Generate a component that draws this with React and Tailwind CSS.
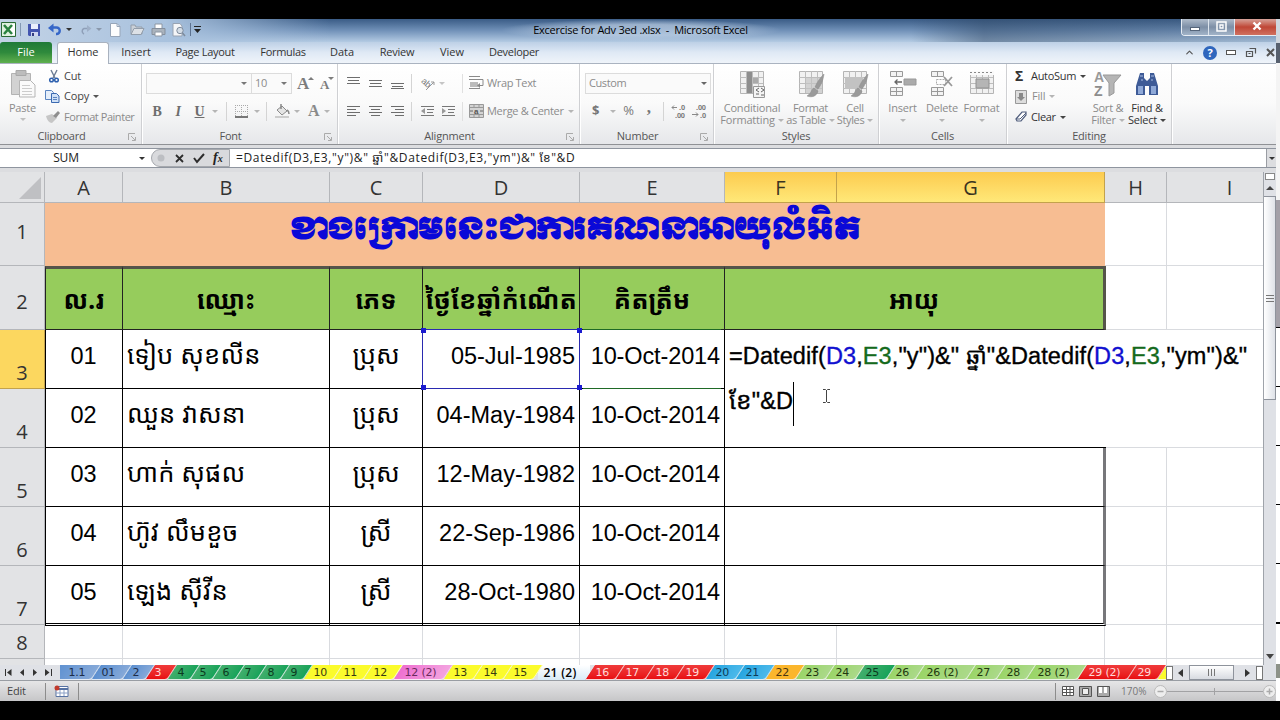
import { ChevronUp } from 'lucide-react'

const RIBBON_TABS = [
  { label: 'Insert', cls: 'w-[54px]' },
  { label: 'Page Layout', cls: 'w-[84px] tracking-[-0.3px]' },
  { label: 'Formulas', cls: 'w-[72px] tracking-[-0.3px]' },
  { label: 'Data', cls: 'w-[46px]' },
  { label: 'Review', cls: 'w-[64px] tracking-[-0.2px]' },
  { label: 'View', cls: 'w-[46px]' },
  { label: 'Developer', cls: 'w-[78px] tracking-[-0.3px]' },
]

const ROWS = [
  { id: '01', name: 'ទៀប សុខលីន', sex: 'ប្រុស', dob: '05-Jul-1985' },
  { id: '02', name: 'ឈួន វាសនា', sex: 'ប្រុស', dob: '04-May-1984' },
  { id: '03', name: 'ហាក់ សុផល', sex: 'ប្រុស', dob: '12-May-1982' },
  { id: '04', name: 'ហ៊ូវ លឹមខួច', sex: 'ស្រី', dob: '22-Sep-1986' },
  { id: '05', name: 'ឡេង ស៊ីវីន', sex: 'ស្រី', dob: '28-Oct-1980' },
]

const BLUE = 'bg-linear-to-r from-[#5b8fd0] to-[#86a9d8] text-[#1c2c48]'
const RED = 'bg-linear-to-b from-[#f03a3a] to-[#e80c10] text-[#ffd9d9]'
const GREEN = 'bg-linear-to-r from-[#3fae6c] to-[#16a35a] text-[#0c3a20]'
const YELLOW = 'bg-[#fbfb2c] text-[#3a3a10]'
const PINK = 'bg-linear-to-r from-[#ee6fd0] to-[#f3a3e0] text-[#6a2a5c]'
const SKY = 'bg-linear-to-r from-[#25a5e0] to-[#4bb9ea] text-[#0d3b58]'
const ORANGE = 'bg-[#fbb62c] text-[#4a3510]'
const LIME = 'bg-linear-to-r from-[#9ad566] to-[#abd98a] text-[#22380f]'

const SHEETS = [
  { label: '1.1', color: BLUE, cls: 'w-[46px] -ml-[10px] pl-[14px]' },
  { label: '01', color: BLUE, cls: 'w-[31px]' },
  { label: '2', color: BLUE, cls: 'w-[23px]' },
  { label: '3', color: RED, cls: 'w-[22px]' },
  { label: '4', color: GREEN, cls: 'w-[23px]' },
  { label: '5', color: GREEN, cls: 'w-[22px]' },
  { label: '6', color: GREEN, cls: 'w-[23px]' },
  { label: '7', color: GREEN, cls: 'w-[22px]' },
  { label: '8', color: GREEN, cls: 'w-[23px]' },
  { label: '9', color: GREEN, cls: 'w-[23px]' },
  { label: '10', color: YELLOW, cls: 'w-[30px]' },
  { label: '11', color: YELLOW, cls: 'w-[30px]' },
  { label: '12', color: YELLOW, cls: 'w-[30px]' },
  { label: '12 (2)', color: PINK, cls: 'w-[50px]' },
  { label: '13', color: YELLOW, cls: 'w-[30px]' },
  { label: '14', color: YELLOW, cls: 'w-[30px]' },
  { label: '15', color: YELLOW, cls: 'w-[30px]' },
  { label: '21 (2)', active: true, cls: 'w-[52px]' },
  { label: '16', color: RED, cls: 'w-[30px]' },
  { label: '17', color: RED, cls: 'w-[30px]' },
  { label: '18', color: RED, cls: 'w-[30px]' },
  { label: '19', color: RED, cls: 'w-[30px]' },
  { label: '20', color: SKY, cls: 'w-[30px]' },
  { label: '21', color: SKY, cls: 'w-[30px]' },
  { label: '22', color: ORANGE, cls: 'w-[30px]' },
  { label: '23', color: LIME, cls: 'w-[30px]' },
  { label: '24', color: LIME, cls: 'w-[30px]' },
  { label: '25', color: GREEN, cls: 'w-[31px]' },
  { label: '26', color: LIME, cls: 'w-[29px]' },
  { label: '26 (2)', color: LIME, cls: 'w-[51px]' },
  { label: '27', color: LIME, cls: 'w-[30px]' },
  { label: '28', color: LIME, cls: 'w-[30px]' },
  { label: '28 (2)', color: LIME, cls: 'w-[51px]' },
  { label: '29 (2)', color: RED, cls: 'w-[50px]' },
  { label: '29', color: RED, cls: 'w-[30px]' },
  { label: '', color: YELLOW, cls: 'w-[20px]' },
]

function Caret({ cls = 'border-t-[#777]' }) {
  return <span className={`inline-block h-0 w-0 shrink-0 border-x-[3px] border-t-[3px] border-x-transparent ${cls}`} />
}

function Icon({ w, h, children, cls = '' }) {
  return (
    <svg width={w} height={h} viewBox={`0 0 ${w} ${h}`} className={`shrink-0 overflow-visible ${cls}`} fill="none">
      {children}
    </svg>
  )
}

function Lines({ rows, cls = '' }) {
  return (
    <Icon w={14} h={13} cls={cls}>
      {rows.map(([x, y, w]) => (
        <path key={y} d={`M${x} ${y}.5h${w}`} stroke="#6d6d6d" />
      ))}
    </Icon>
  )
}

function Group({ label, launcher, cls, children }) {
  return (
    <section className={`flex h-full shrink-0 flex-col border-r border-[#cfd0d3] shadow-[1px_0_0_#fff] ${cls}`}>
      <div className="h-[64px] shrink-0">{children}</div>
      <div className={`relative flex h-[16px] items-center justify-center text-[#555] ${launcher ? 'pr-[18px]' : ''}`}>
        <span>{label}</span>
        {launcher && (
          <Icon w={8} h={8} cls="absolute right-[5px] bottom-[3px]">
            <path d="M.5 7V.5H7M3 3l4 4M7.500 4v3.500H4" stroke="#aaa" />
          </Icon>
        )}
      </div>
    </section>
  )
}

function BigButton({ icon, lines, caret, dark, cls }) {
  return (
    <div className={`flex shrink-0 flex-col items-center pt-[6px] ${dark ? 'text-[#333]' : 'text-[#8b8b8b]'} ${cls}`}>
      <div className="flex h-[28px] items-center">{icon}</div>
      <span className="mt-[3px] h-[13px] leading-[13px] whitespace-nowrap">{lines[0]}</span>
      <span className="flex h-[12px] items-center gap-[3px] leading-[12px] whitespace-nowrap">
        {lines[1]}
        {caret && <Caret cls={dark ? 'border-t-[#444]' : 'border-t-[#b5b5b5]'} />}
      </span>
    </div>
  )
}

function TableIcon({ children }) {
  return (
    <Icon w={28} h={28}>
      <path d="M2.500 1.500h23v22h-23z" fill="#f1f1f1" stroke="#b5b5b5" />
      <path d="M2 7.500h23M2 13.500h23M2 18.500h23M8.500 1v22M14.500 1v22M20.500 1v22" stroke="#bdbdbd" />
      {children}
    </Icon>
  )
}

const BRUSH = <path d="M27 4c-4 4-7 8-9 13l3 2c3-4 5-8 6-15zM17 18c-3 1-2 5-7 8 5 2 10 0 11-5z" fill="#9a9a9a" stroke="#8a8a8a" strokeWidth=".5" />

function TitleBar() {
  return (
    <div className="flex h-[23px] bg-linear-to-b from-[#3a5c86] via-[#7191b8] to-[#b4cbe3]">
      <div className="flex w-[330px] shrink-0 items-center bg-linear-to-r from-[#c3d3e6] via-[#a9c2de] to-transparent pb-[2px]">
        <Icon w={15} h={15} cls="ml-[1px]">
          <path d="M.5.5h14v14H.5z" fill="#dff0df" stroke="#2b6a37" />
          <path d="M9 2h5v11H9z" fill="#fff" />
          <path d="M3 3l8 9M11 3l-8 9" stroke="#2a8240" strokeWidth="2.600" />
        </Icon>
        <span className="ml-[4px] h-[13px] w-px bg-[#8398b3]" />
        <Icon w={14} h={14} cls="ml-[6px]">
          <path d="M1 1h12v12H2L1 12z" fill="#4355b0" />
          <path d="M4 1h7v5H4z" fill="#e9eefc" />
          <path d="M4 9h7v4H4z" fill="#cfd6f0" />
          <path d="M5 10h2v3H5z" fill="#333d80" />
        </Icon>
        <Icon w={14} h={13} cls="ml-[7px]">
          <path d="M3 4.500h5.500a3 3 0 010 6.500H8" stroke="#3566c8" strokeWidth="2.400" />
          <path d="M0 5L5.500 .5v9z" fill="#3566c8" />
        </Icon>
        <Caret cls="ml-[4px] border-t-[#333]" />
        <Icon w={13} h={12} cls="ml-[7px]">
          <path d="M9 4.500H5a3 3 0 000 5.500" stroke="#8e9fb8" strokeWidth="1.500" />
          <path d="M12.500 4.500L8 1v7z" fill="#9fb0c8" />
        </Icon>
        <Caret cls="ml-[4px] border-t-[#8a98ac]" />
        <Icon w={11} h={14} cls="ml-[8px]">
          <path d="M.5.5h6.500l3 3v10H.5z" fill="#fdfdfd" stroke="#97a5b8" />
          <path d="M7 .5v3h3" stroke="#97a5b8" />
        </Icon>
        <Icon w={14} h={13} cls="ml-[9px]">
          <path d="M1 11V2h4l1 2h6v7z" fill="#cbd1d8" stroke="#939eab" />
          <path d="M1 11.500l3-6h10l-3 6z" fill="#dde1e6" stroke="#939eab" />
        </Icon>
        <Icon w={15} h={14} cls="ml-[7px]">
          <path d="M4 1h7v5H4z" fill="#fff" stroke="#8c96a3" />
          <path d="M1 5.500h13v6H1z" fill="#aab3bd" stroke="#858f9c" />
          <path d="M4 9h7v4H4z" fill="#fff" stroke="#8c96a3" />
        </Icon>
        <Icon w={14} h={14} cls="ml-[6px]">
          <path d="M1 .5h7l2 2.500v10H1z" fill="#f5f6f8" stroke="#98a3b2" />
          <circle cx="8" cy="7.500" r="3.200" fill="#d4dde6" stroke="#7e8b9c" />
          <path d="M10.500 10l2.500 3" stroke="#7e8b9c" strokeWidth="1.500" />
        </Icon>
        <span className="ml-[4px] h-[13px] w-px bg-[#5d7290]" />
        <Icon w={7} h={8} cls="ml-[3px]">
          <path d="M0 .5h7" stroke="#222" />
          <path d="M0 3h7L3.500 7z" fill="#222" />
        </Icon>
      </div>
      <div className="flex flex-1 justify-center">
        <span className="ml-[40px] h-[22px] w-[280px] bg-[radial-gradient(closest-side,rgba(200,216,234,0.6)_50%,rgba(200,216,234,0)_100%)] text-center text-[11px] leading-[22px] tracking-[-0.26px] whitespace-pre text-black">
          Excercise for Adv 3ed .xlsx  -  Microsoft Excel
        </span>
      </div>
      <div className="flex w-[365px] shrink-0 justify-end bg-linear-to-r from-transparent from-0% via-[#2f4866]/50 via-20% to-[#3e5a7c]/15">
        <div className="flex h-[17px] overflow-hidden rounded-bl-[4px] border-b border-l border-[#e7edf4]">
          <div className="flex w-[27px] justify-center border-r border-[#dde5ee] bg-linear-to-b from-[#b0bccb] via-[#7d8fa6] to-[#a2b4c9]">
            <span className="mt-[8px] h-[4px] w-[10px] border border-[#55657a] bg-white" />
          </div>
          <div className="flex w-[26px] justify-center border-r border-[#dde5ee] bg-linear-to-b from-[#b0bccb] via-[#7d8fa6] to-[#a2b4c9]">
            <Icon w={11} h={11} cls="mt-[2px]">
              <path d="M1 1h9v9H1z" stroke="#fff" strokeWidth="1.500" />
              <path d="M4 4h3v3H4z" stroke="#fff" strokeWidth="1.300" />
            </Icon>
          </div>
          <div className="flex w-[41px] justify-center bg-linear-to-b from-[#d5a29a] via-[#bf4636] to-[#d0705f]">
            <Icon w={11} h={11} cls="mt-[2px] ml-[3px]">
              <path d="M1.500 1.500l7 7M8.500 1.500l-7 7" stroke="#fff" strokeWidth="2.400" />
            </Icon>
          </div>
        </div>
      </div>
    </div>
  )
}

function TabStrip() {
  return (
    <div className="flex h-[22px] items-end border-b border-[#aab3c0] bg-linear-to-b from-[#bdd0e6] via-[#dfe9f5] to-[#eff4fa]">
      <div className="flex h-[21px] w-[52px] items-center justify-center rounded-t-[3px] bg-linear-to-b from-[#1f7a38] via-[#2f8a3c] to-[#5fb04e] text-white">File</div>
      <div className="-mb-px ml-[5px] flex h-[22px] w-[52px] items-center justify-center rounded-t-[3px] border border-b-0 border-[#a9b2bf] bg-white pb-[2px] text-[#333]">Home</div>
      {RIBBON_TABS.map((t) => (
        <div key={t.label} className={`flex h-[21px] shrink-0 items-center justify-center whitespace-nowrap text-[#333] ${t.cls}`}>
          {t.label}
        </div>
      ))}
      <div className="ml-auto flex h-[21px] items-center">
        <ChevronUp size={11} strokeWidth={2.500} className="mr-[8px] text-[#555]" />
        <div className="mr-[9px] flex h-[14px] w-[14px] items-center justify-center rounded-full bg-[#2f66bd] text-[11px] leading-none font-bold text-white">?</div>
        <span className="mr-[9px] h-[5px] w-[10px] border border-[#555] bg-white" />
        <Icon w={12} h={11} cls="mr-[9px]">
          <path d="M4.500 1.500h6v5M1.500 4.500h6v5h-6zM3.500 6.500h2" stroke="#555" strokeWidth="1.200" />
        </Icon>
        <Icon w={9} h={9} cls="mr-px">
          <path d="M1 1l7 7M8 1L1 8" stroke="#555" strokeWidth="2" />
        </Icon>
      </div>
    </div>
  )
}

function Ribbon() {
  return (
    <div className="flex h-[80px] bg-linear-to-b from-white via-[#fafafa] to-[#e6e7ea] tracking-[-0.2px]">
      <Group label="Clipboard" launcher cls="w-[142px]">
        <div className="flex">
          <div className="flex w-[45px] flex-col items-center pt-[5px] text-[#8b8b8b]">
            <Icon w={26} h={29}>
              <path d="M1.500 4.500h19v21h-19z" fill="#d2d2d2" stroke="#b3b3b3" />
              <path d="M6 1.500h10v5H6z" fill="#bcbcbc" stroke="#a8a8a8" />
              <path d="M9.500 11.500h11l4.500 4.500v12H9.500z" fill="#fafafa" stroke="#b5b5b5" />
              <path d="M12 16.500h8M12 19.500h10M12 22.500h10M12 25.500h10" stroke="#ccc" />
            </Icon>
            <span className="mt-[3px] h-[14px] leading-[14px]">Paste</span>
            <Caret cls="mt-[3px] border-t-[#c0c0c0]" />
          </div>
          <div className="flex flex-col pt-[2px] text-[#444]">
            <div className="flex h-[20px] items-center gap-[5px] pl-[4px]">
              <Icon w={10} h={13}>
                <path d="M2 0l4 8M8 0L4 8" stroke="#6c7c94" strokeWidth="1.400" />
                <circle cx="2.500" cy="10" r="1.800" stroke="#2c5fae" strokeWidth="1.500" />
                <circle cx="7.500" cy="10" r="1.800" stroke="#2c5fae" strokeWidth="1.500" />
              </Icon>
              Cut
            </div>
            <div className="flex h-[21px] items-center gap-[4px]">
              <Icon w={15} h={13}>
                <path d="M.5.5h6l2 2v7h-8z" fill="#e5eefa" stroke="#5a84c0" />
                <path d="M6.500 3.500h5l2.500 2.500v6.500H6.500z" fill="#cfe0f6" stroke="#3a69b0" />
                <path d="M8 7.500h4M8 9.500h4" stroke="#5a84c0" />
              </Icon>
              Copy <Caret cls="border-t-[#555]" />
            </div>
            <div className="flex h-[20px] items-center gap-[4px] whitespace-nowrap text-[#8b8b8b]">
              <Icon w={15} h={13}>
                <path d="M1 5l6-2 5 4-5 5c-3 0-5-3-6-7z" fill="#c6c6c6" />
                <path d="M8 5l5-5 2 2-4 5z" fill="#8e8e8e" />
              </Icon>
              <span className="tracking-[-0.45px]">Format Painter</span>
            </div>
          </div>
        </div>
      </Group>

      <Group label="Font" launcher cls="w-[196px]">
        <div className="mt-[9px] flex h-[21px] items-center pl-[4px] text-[#8b8b8b]">
          <div className="flex h-[21px] w-[106px] items-center justify-end border border-[#dcdcdc] bg-[#fafafa] pr-[4px]"><Caret /></div>
          <div className="flex h-[21px] w-[40px] items-center justify-between border border-l-0 border-[#dcdcdc] bg-[#fafafa] pr-[4px] pl-[3px]">10 <Caret /></div>
          <div className="ml-[5px] flex h-[21px] font-['Liberation_Serif',serif] font-bold text-[#7d7d7d]">
            <span className="text-[17px] leading-[22px]">A</span><Caret cls="mt-[4px] -ml-px rotate-180 border-t-[#7d7d7d]" />
            <span className="ml-[6px] text-[13px] leading-[24px]">A</span><Caret cls="mt-[4px] -ml-px border-t-[#7d7d7d]" />
          </div>
        </div>
        <div className="mt-[6px] flex h-[22px] items-center font-['Liberation_Serif',serif] text-[14px] text-[#6d6d6d]">
          <b className="ml-[9px] w-[12px] text-center">B</b>
          <i className="ml-[10px] w-[10px] text-center font-bold">I</i>
          <span className="ml-[11px] w-[11px] text-center font-bold underline">U</span>
          <Caret cls="ml-[7px] border-t-[#b5b5b5]" />
          <span className="ml-[8px] h-[19px] w-px bg-[#d4d4d4]" />
          <Icon w={13} h={13} cls="ml-[8px]">
            <path d="M.5 0v12M6.500 0v12M12.500 0v12M0 .5h13M0 6.500h13" stroke="#aaa" strokeDasharray="1 1" />
            <path d="M0 12h13" stroke="#777" strokeWidth="2" />
          </Icon>
          <Caret cls="ml-[6px] border-t-[#b5b5b5]" />
          <span className="ml-[6px] h-[19px] w-px bg-[#d4d4d4]" />
          <Icon w={16} h={14} cls="ml-[8px]">
            <path d="M2 6l5-4 5 5-5 4z" fill="#e4e4e4" stroke="#8a8a8a" />
            <path d="M6 0v5M12 6c2 1 2 2 2 4" stroke="#888" strokeWidth="1.500" />
            <path d="M0 13h14" stroke="#ccc" strokeWidth="2" />
          </Icon>
          <Caret cls="ml-[3px] border-t-[#b5b5b5]" />
          <b className="ml-[8px] text-[16px] text-[#8a8a8a]">A</b>
          <Caret cls="ml-[5px] border-t-[#b5b5b5]" />
        </div>
      </Group>

      <Group label="Alignment" launcher cls="w-[242px]">
        <div className="mt-[9px] flex h-[21px] items-center text-[#8b8b8b]">
          <Lines cls="ml-[9px] mt-[-4px]" rows={[[0, 2, 13], [1, 5, 11], [0, 8, 13]]} />
          <Lines cls="ml-[8px]" rows={[[0, 3, 13], [1, 6, 11], [0, 9, 13]]} />
          <Lines cls="ml-[8px] mt-[4px]" rows={[[0, 4, 13], [1, 7, 11], [0, 9, 13]]} />
          <span className="ml-[6px] h-[19px] w-px bg-[#d4d4d4]" />
          <Icon w={15} h={15} cls="ml-[9px]">
            <text x="0" y="9" fontSize="9" fill="#777" fontFamily="Liberation Sans" transform="rotate(42 4 7)">ab</text>
            <path d="M5 14l8-8m-3 0h3v3" stroke="#999" />
          </Icon>
          <Caret cls="ml-[3px] border-t-[#c5c5c5]" />
          <span className="ml-[17px] h-[19px] w-px bg-[#e0e0e0]" />
          <Icon w={16} h={15} cls="ml-[6px]">
            <path d="M0 .5h11M0 3.500h14v6h-3M0 12.500h11" stroke="#8a8a8a" />
            <path d="M1 6h8v5H1z" fill="#bbb" />
            <path d="M11 7v5l-3-2.500z" fill="#888" />
          </Icon>
          <span className="ml-[2px] tracking-[-0.35px] whitespace-nowrap">Wrap Text</span>
        </div>
        <div className="mt-[6px] flex h-[22px] items-center text-[#8b8b8b]">
          <Lines cls="ml-[9px]" rows={[[0, 1, 13], [0, 4, 9], [0, 7, 13], [0, 10, 9]]} />
          <Lines cls="ml-[8px]" rows={[[0, 1, 13], [2, 4, 9], [0, 7, 13], [2, 10, 9]]} />
          <Lines cls="ml-[8px]" rows={[[0, 1, 13], [4, 4, 9], [0, 7, 13], [4, 10, 9]]} />
          <span className="ml-[6px] h-[19px] w-px bg-[#d4d4d4]" />
          <Icon w={15} h={13} cls="ml-[8px]">
            <path d="M1 1.500h13M7 4.500h7M7 7.500h6M1 10.500h13" stroke="#777" />
            <path d="M5 3v6L1 6z" fill="#999" />
          </Icon>
          <Icon w={15} h={13} cls="ml-[6px]">
            <path d="M1 1.500h13M7 4.500h7M7 7.500h6M1 10.500h13" stroke="#777" />
            <path d="M1 3v6l4-3z" fill="#999" />
          </Icon>
          <span className="ml-[6px] h-[19px] w-px bg-[#e0e0e0]" />
          <Icon w={15} h={14} cls="ml-[6px]">
            <path d="M.5.5h14v13H.5z" fill="#d3d3d3" stroke="#999" />
            <path d="M0 3.500h15M0 10.500h15M5 0v3M10 0v3M5 11v3M10 11v3" stroke="#999" />
            <text x="5" y="9.500" fontSize="8" fontWeight="bold" fill="#555" fontFamily="Liberation Sans">a</text>
            <path d="M1 7h3M11 7h3" stroke="#666" />
          </Icon>
          <span className="ml-[3px] tracking-[-0.3px] whitespace-nowrap">Merge &amp; Center</span>
          <Caret cls="ml-[4px] border-t-[#b5b5b5]" />
        </div>
      </Group>

      <Group label="Number" launcher cls="w-[134px]">
        <div className="mt-[9px] ml-[5px] flex h-[21px] w-[126px] items-center justify-between border border-[#dcdcdc] bg-[#fafafa] px-[3px] text-[#8b8b8b]">
          <span className="tracking-[-0.4px]">Custom</span> <Caret cls="border-t-[#666]" />
        </div>
        <div className="mt-[6px] flex h-[22px] items-center text-[#777]">
          <b className="ml-[12px] text-[13px]">$</b>
          <Caret cls="ml-[11px] border-t-[#b5b5b5]" />
          <span className="ml-[7px] text-[13px]">%</span>
          <b className="ml-[13px] -mt-[6px] font-['Liberation_Serif',serif] text-[17px]">,</b>
          <span className="ml-[12px] h-[19px] w-px bg-[#d4d4d4]" />
          <Icon w={16} h={14} cls="ml-[7px]">
            <text x="8" y="6" fontSize="7.500" fontWeight="bold" fill="#777" fontFamily="Liberation Sans">.0</text>
            <text x="4" y="14" fontSize="7.500" fontWeight="bold" fill="#777" fontFamily="Liberation Sans">.00</text>
            <path d="M1 3.500h5M3 1.500l-2 2 2 2" stroke="#888" />
          </Icon>
          <Icon w={16} h={14} cls="ml-[5px]">
            <text x="4" y="6" fontSize="7.500" fontWeight="bold" fill="#777" fontFamily="Liberation Sans">.00</text>
            <text x="8" y="14" fontSize="7.500" fontWeight="bold" fill="#777" fontFamily="Liberation Sans">.0</text>
            <path d="M0 10.500h6M4 8.500l2 2-2 2" stroke="#888" />
          </Icon>
        </div>
      </Group>

      <Group label="Styles" cls="w-[165px]">
        <div className="flex pl-px">
          <BigButton
            cls="w-[74px]"
            lines={['Conditional', 'Formatting']}
            caret
            icon={
              <TableIcon>
                <path d="M9 2h5v21H9z" fill="#8e8e8e" />
                <path d="M15 8h5v5h-5z" fill="#aaa" />
                <path d="M15.500 16.500h11v11h-11z" fill="#f4f4f4" stroke="#999" />
                <path d="M21 18l-3 2 3 2M18 24h3M23 18l3 2-3 2M23 25h3" stroke="#666" />
              </TableIcon>
            }
          />
          <BigButton cls="w-[43px] tracking-[-0.35px]" lines={['Format', 'as Table']} caret icon={<TableIcon><path d="M9 8h16v15H9z" fill="#c4c4c4" opacity=".7" />{BRUSH}</TableIcon>} />
          <BigButton cls="ml-[2px] w-[42px] tracking-[-0.35px]" lines={['Cell', 'Styles']} caret icon={<TableIcon><path d="M4 7h18v12H4z" fill="#c2c2c2" />{BRUSH}</TableIcon>} />
        </div>
      </Group>

      <Group label="Cells" cls="w-[128px]">
        <div className="flex pl-[3px]">
          <BigButton
            cls="w-[41px]"
            lines={['Insert', '']}
            caret
            icon={
              <Icon w={28} h={28}>
                <path d="M1.500 1.500h12v5h-12zM1.500 17.500h12v8h-12zM7.500 2v5M7.500 17v8M1 21.500h12" stroke="#999" fill="#f3f3f3" />
                <path d="M15 9h12v6H15z" fill="#ababab" stroke="#999" />
                <path d="M6 12h7M8.500 9.500L6 12l2.500 2.500" stroke="#666" strokeWidth="1.300" />
              </Icon>
            }
          />
          <BigButton
            cls="w-[38px]"
            lines={['Delete', '']}
            caret
            icon={
              <Icon w={28} h={28}>
                <path d="M3.500 1.500h12v5h-12zM3.500 17.500h12v8h-12zM9.500 2v5M9.500 17v8M3 21.500h12" stroke="#999" fill="#f3f3f3" />
                <path d="M8.500 9.500h9v5h-9z" stroke="#aaa" strokeDasharray="2 1" />
                <path d="M16 7l8 9M24 7l-8 9" stroke="#999" strokeWidth="1.800" />
              </Icon>
            }
          />
          <BigButton
            cls="w-[41px]"
            lines={['Format', '']}
            caret
            icon={
              <TableIcon>
                <path d="M2 1h24v4H2z" fill="#fafafa" />
                <path d="M2 2.500h24" stroke="#888" strokeDasharray="2 2" />
                <path d="M8 9h13v9H8z" fill="#b5b5b5" stroke="#909090" />
              </TableIcon>
            }
          />
        </div>
      </Group>

      <Group label="Editing" cls="w-[165px]">
        <div className="flex">
          <div className="flex w-[83px] shrink-0 flex-col pt-[2px] pl-[8px] text-[#333]">
            <div className="flex h-[20px] items-center whitespace-nowrap">
              <b className="w-[16px] text-[14px] leading-none">Σ</b>
              <span className="tracking-[-0.3px]">AutoSum</span> <Caret cls="ml-[4px] border-t-[#444]" />
            </div>
            <div className="flex h-[21px] items-center text-[#8b8b8b]">
              <Icon w={12} h={14} cls="mr-[5px]">
                <path d="M.5.5h11v13H.5z" fill="#ddd" stroke="#999" />
                <path d="M4 3h4v4h2l-4 4-4-4h2z" fill="#888" />
              </Icon>
              Fill <Caret cls="ml-[4px] border-t-[#b5b5b5]" />
            </div>
            <div className="flex h-[20px] items-center">
              <Icon w={12} h={12} cls="mr-[4px]">
                <path d="M1 8l6-7h4v3L6 10H2z" fill="#fff" stroke="#4f5d7c" strokeWidth="1.200" />
                <path d="M1 8h4l6-6" stroke="#4f5d7c" />
              </Icon>
              <span className="tracking-[-0.35px]">Clear</span> <Caret cls="ml-[4px] border-t-[#444]" />
            </div>
          </div>
          <BigButton
            cls="w-[36px]"
            lines={['Sort &', 'Filter']}
            caret
            icon={
              <Icon w={28} h={28}>
                <text x="0" y="12" fontSize="14" fontWeight="bold" fill="#999" fontFamily="Liberation Sans">A</text>
                <text x="0" y="26" fontSize="14" fontWeight="bold" fill="#8d8d8d" fontFamily="Liberation Sans">Z</text>
                <path d="M9 5h18l-7 8v10l-5 3V13z" fill="#b5b5b5" stroke="#999" />
              </Icon>
            }
          />
          <BigButton
            cls="w-[42px]"
            dark
            lines={['Find &', 'Select']}
            caret
            icon={
              <Icon w={26} h={26}>
                <path d="M6 2h4v5l3 3 3-3V2h4l4 13v9h-9v-9h-4v9H2v-9z" fill="#3e5b97" />
                <path d="M4 15h5v8H4zM17 15h5v8h-5z" fill="#8fa9d8" />
                <path d="M6 5h3M17 5h3M7 9h2M17 9h2" stroke="#a9bde2" />
              </Icon>
            }
          />
        </div>
      </Group>
    </div>
  )
}

function FormulaBar() {
  return (
    <div className="flex h-[28px] border-t border-[#8f9195] bg-[#dcdde0] pt-[3px] pb-[3px]">
      <div className="flex h-[20px] flex-1 border-y border-[#8f959f] bg-white text-[12px] text-[#222]">
        <div className="flex w-[151px] shrink-0 items-center pr-[6px]">
          <span className="w-[132px] text-center tracking-[-0.2px]">SUM</span>
          <Caret cls="ml-auto border-t-[#333]" />
        </div>
        <div className="flex w-[79px] shrink-0 items-center rounded-l-[10px] border border-[#a5a8ad] bg-[#d9dadd] pl-[5px]">
          <Icon w={8} h={8}><circle cx="4" cy="4" r="3.500" fill="#bcbec2" /></Icon>
          <Icon w={9} h={9} cls="ml-[10px]"><path d="M1 1l7 7M8 1L1 8" stroke="#2d2d2d" strokeWidth="1.800" /></Icon>
          <Icon w={12} h={10} cls="ml-[9px]"><path d="M1 5l3 4 7-8" stroke="#2d2d2d" strokeWidth="2" /></Icon>
          <i className="ml-[8px] font-['Liberation_Serif',serif] text-[14px] leading-none font-bold">f<span className="text-[10px]">x</span></i>
        </div>
        <span className="pl-[6px] leading-[18px] tracking-[0.64px] whitespace-pre">{'=Datedif(D3,E3,"y")&" ឆ្នាំ"&Datedif(D3,E3,"ym")&" ខែ"&D'}</span>
        <div className="ml-auto flex w-[10px] items-center justify-center border-l border-[#9a9da3] bg-[#dcdde0]"><Caret cls="border-t-[#333]" /></div>
      </div>
    </div>
  )
}

function ColHead({ children, active }) {
  return (
    <div className={`flex items-center justify-center border-r border-b pt-px ${active ? 'border-[#c3a24c] bg-linear-to-b from-[#fccb4e] to-[#ffe878] text-[#3a3320]' : 'border-[#b4b6ba] bg-[#e2e3e5] text-[#333]'}`}>
      {children}
    </div>
  )
}

function RowHead({ n, active, cls = 'items-end pb-px' }) {
  return (
    <div className={`flex justify-center border-r border-b ${cls} ${active ? 'border-[#c3a24c] bg-[#fcd75f]' : 'border-[#b4b6ba] bg-[#e2e3e5]'} leading-[28px] text-[#333]`}>
      {n}
    </div>
  )
}

const CELL = 'border-r border-b flex min-w-0 whitespace-nowrap leading-[36px]'
const KHMER = 'pt-[6px] text-[25.5px]'
const DIGITS = "pt-[8px] font-['Liberation_Sans',sans-serif] text-[23.5px]"
const HEAD = 'flex items-center justify-center border-r border-b border-[#222] bg-[#96cc5c] font-bold whitespace-nowrap text-[25.5px] border-t-[3px] border-t-[#55544a]'
const EMPTY = 'border-r border-b border-[#d9dbdf]'

function Handles({ color }) {
  return ['-top-[2px] -left-[2px]', '-top-[2px] -right-[3px]', '-bottom-[2px] -left-[2px]', '-bottom-[2px] -right-[3px]'].map((pos) => (
    <span key={pos} className={`absolute z-10 h-[5px] w-[5px] ${color} ${pos}`} />
  ))
}

function Sheet() {
  return (
    <div className="grid w-[1263px] shrink-0 grid-cols-[45px_78px_207px_93px_157px_145px_112px_268px_62px_126px] grid-rows-[31px_63px_64px_59px_59px_59px_59px_59px_34px_6px] overflow-hidden bg-white font-['Open_Sans','Noto_Sans_Khmer',sans-serif] text-[20px]">
      <div className="flex items-end justify-end border-r border-b border-[#b4b6ba] bg-[#e2e3e5] p-[3px]">
        <Icon w={22} h={22}><path d="M22 0v22H0z" fill="#bfc0c3" /></Icon>
      </div>
      {['A', 'B', 'C', 'D', 'E', 'F', 'G', 'H', 'I'].map((c) => (
        <ColHead key={c} active={c === 'F' || c === 'G'}>{c}</ColHead>
      ))}

      <RowHead n="1" cls="items-center pb-[5px]" />
      <div className="col-span-7 flex justify-center bg-[#f7bd92] pt-[11px] font-['Moul','Noto_Serif_Khmer','Noto_Sans_Khmer',serif] text-[30.5px] leading-[32px] font-black whitespace-nowrap text-[#0a08d8]">
        ខាងក្រោមនេះជាការគណនាអាយុលំអិត
      </div>
      <div className={EMPTY} />
      <div className={EMPTY} />

      <RowHead n="2" cls="items-center pt-[9px]" />
      {['ល.រ', 'ឈ្មោះ', 'ភេទ', 'ថ្ងៃខែឆ្នាំកំណើត', 'គិតត្រឹម'].map((h, i) => (
        <div key={h} className={`${HEAD} ${i === 0 ? 'border-l' : ''}`}>{h}</div>
      ))}
      <div className={`${HEAD} relative z-10 col-span-2 -mr-px border-r-[3px] border-r-[#55544a]`}>អាយុ</div>
      <div className={EMPTY} />
      <div className={EMPTY} />

      {ROWS.map((r, i) => (
        <Row key={r.id} row={r} index={i} />
      ))}

      <RowHead n="8" cls="items-center pt-[3px]" />
      {['a', 'b', 'c', 'd', 'e', 'f', 'g', 'h', 'i'].map((k) => (
        <div key={k} className={EMPTY} />
      ))}
      <div className="border-r border-[#b4b6ba] bg-[#e2e3e5]" />
      {['a', 'b', 'c', 'd', 'e', 'f', 'g', 'h', 'i'].map((k) => (
        <div key={k} className="border-r border-[#d9dbdf]" />
      ))}
    </div>
  )
}

function Row({ row, index }) {
  const first = index === 0
  // the table closes with a double rule that reaches one pixel into the next row
  const edge = index === ROWS.length - 1 ? 'relative z-10 -mb-px border-black border-b-[3px] [border-bottom-style:double]' : 'border-black'
  return (
    <>
      <RowHead n={index + 3} active={first} />
      <div className={`${CELL} ${DIGITS} ${edge} justify-center border-l pr-px`}>{row.id}</div>
      <div className={`${CELL} ${KHMER} ${edge} pl-[4px] tracking-[0.15px]`}>{row.name}</div>
      <div className={`${CELL} ${KHMER} ${edge} justify-center`}>{row.sex}</div>
      <div className={`${CELL} ${DIGITS} ${edge} relative justify-end pr-[4px]`}>
        {row.dob}
        {first && <span className="absolute -inset-px border border-[#2a2ab0]" />}
        {first && <Handles color="bg-[#1a1ad0]" />}
      </div>
      <div className={`${CELL} ${DIGITS} ${edge} relative justify-end pr-[4px] tracking-[-0.12px]`}>
        10-Oct-2014
        {first && <span className="absolute -inset-y-px inset-x-[3px] border-y border-[#1f6a26]" />}
      </div>
      {first && <FormulaEditor />}
      {index > 1 && (
        <>
          <div className={`relative z-10 col-span-2 -mr-px border-b border-black ${edge} border-r-[3px] border-r-[#77777a] ${index === 2 ? 'shadow-[0_-1px_0_#000] z-20' : ''}`} />
          <div className={EMPTY} />
          <div className={EMPTY} />
        </>
      )}
    </>
  )
}

function FormulaEditor() {
  return (
    <div className="relative z-10 col-span-4 row-span-2 border-b border-[#d9dbdf] bg-white pt-[4px] pl-[4px] font-['Liberation_Sans','Noto_Sans_Khmer',sans-serif] text-[23.5px] leading-[44px] tracking-[0.1px] whitespace-pre text-black [-webkit-text-stroke:0.35px]">
      =Datedif(<span className="text-[#1010d0]">D3</span>,<span className="text-[#146a1c]">E3</span>,"y")&amp;" <span className="text-[22.5px]">ឆ្នាំ</span>"&amp;Datedif(<span className="text-[#1010d0]">D3</span>,<span className="text-[#146a1c]">E3</span>,"ym")&amp;"
      {'\n'}
      <span className="text-[24.5px]">ខែ</span>"&amp;D<span className="inline-block h-[44px] w-px translate-y-[3px] bg-black align-top" />
      <Icon w={7} h={14} cls="absolute top-[59px] left-[98px]">
        <path d="M0 .5h2.500l1 1 1-1H7M3.500 1v12M0 13.500h2.500l1-1 1 1H7" stroke="#444" />
      </Icon>
    </div>
  )
}

function VerticalScroll() {
  return (
    <div className="flex w-[13px] flex-col items-center border-l border-[#9fa3aa] bg-[#dfe1e6]">
      <span className="mt-px h-[7px] w-[10px] border border-[#888] bg-white" />
      <span className="mt-[6px] mb-[6px] h-0 w-0 border-x-[4px] border-b-[4px] border-x-transparent border-b-[#444]" />
      <div className="flex h-[204px] w-full flex-col items-center justify-center gap-[2px] border border-l-0 border-[#8e939c] bg-linear-to-r from-white to-[#dfe2e8]">
        <i className="h-px w-[8px] bg-[#777]" />
        <i className="h-px w-[8px] bg-[#777]" />
        <i className="h-px w-[8px] bg-[#777]" />
      </div>
      <Caret cls="mt-auto mb-[6px] border-x-[4px] border-t-[5px] border-t-[#444]" />
    </div>
  )
}

function SheetTabs() {
  return (
    <div className="flex h-[16px] border-b border-[#999da3] bg-[#dfe1e6]">
      <div className="flex w-[60px] shrink-0 items-center gap-[7px] pl-[5px]">
        <Icon w={7} h={7}><path d="M.5 0v7" stroke="#333" /><path d="M6.500 0v7L2 3.500z" fill="#333" /></Icon>
        <Icon w={6} h={7}><path d="M5 0v7L1 3.500z" fill="#333" /></Icon>
        <Icon w={6} h={7}><path d="M1 0v7l4-3.500z" fill="#333" /></Icon>
        <Icon w={7} h={7}><path d="M6.500 0v7" stroke="#333" /><path d="M0 0v7l4.500-3.500z" fill="#333" /></Icon>
      </div>
      <div className="flex w-[1106px] shrink-0 overflow-hidden font-['DejaVu_Sans',sans-serif] text-[11px] tracking-[-0.2px]">
        {SHEETS.map((s) =>
          s.active ? (
            <div key={s.label} className={`flex h-[15px] shrink-0 items-center justify-center bg-linear-to-b from-white to-[#d9ebf7] pt-px pr-[8px] font-['Open_Sans',sans-serif] text-[12px] leading-[14px] font-semibold tracking-[0.3px] text-black ${s.cls}`}>{s.label}</div>
          ) : (
            <div key={s.label} className={`flex h-[15px] shrink-0 -skew-x-[33deg] items-center justify-center rounded-br-[3px] border-r-[1.500px] border-b border-white/80 pt-[2px] pr-[4px] ${s.color} ${s.cls}`}>
              <span className="skew-x-[33deg] whitespace-nowrap">{s.label}</span>
            </div>
          ),
        )}
      </div>
      <div className="flex flex-1 items-center">
        <span className="h-[14px] w-[7px] border border-[#777] bg-white" />
        <Icon w={5} h={8} cls="ml-[5px]"><path d="M5 0v8L0 4z" fill="#333" /></Icon>
        <div className="ml-[6px] flex h-[15px] w-[45px] items-center justify-center gap-[2px] border border-[#8e939c] bg-linear-to-b from-white to-[#d8dbe1]">
          <i className="h-[7px] w-px bg-[#777]" />
          <i className="h-[7px] w-px bg-[#777]" />
          <i className="h-[7px] w-px bg-[#777]" />
        </div>
        <Icon w={5} h={8} cls="ml-[11px]"><path d="M0 0v8l5-4z" fill="#333" /></Icon>
        <span className="ml-[6px] h-[14px] w-[7px] border border-[#777] bg-white" />
      </div>
    </div>
  )
}

function StatusBar() {
  return (
    <div className="flex h-[20px] items-center bg-linear-to-b from-[#e6e6e7] to-[#c6c6c8] text-[#444]">
      <span className="w-[45px] pl-[7px] text-[11px] tracking-[-0.2px]">Edit</span>
      <span className="h-[17px] w-px bg-[#8c8c8c]" />
      <Icon w={15} h={12} cls="ml-[8px]">
        <path d="M2 1.500h12v10H2z" fill="#fff" stroke="#5873a3" />
        <path d="M2 4h12" stroke="#5873a3" strokeWidth="2" />
        <path d="M6 5v6M10 5v6M2 8h12" stroke="#8ba0c5" />
        <circle cx="3" cy="3" r="2.500" fill="#c03a2c" />
      </Icon>
      <span className="ml-[9px] h-[17px] w-px bg-[#8c8c8c]" />
      <span className="ml-auto h-[17px] w-px bg-[#8c8c8c]" />
      <Icon w={12} h={10} cls="ml-[6px]">
        <path d="M.5.5h11v9H.5zM0 3.500h12M0 6.500h12M4.500 0v10M8 0v10" fill="#fff" stroke="#555" />
      </Icon>
      <Icon w={13} h={11} cls="ml-[5px]">
        <path d="M.5.5h12v10H.5z" fill="#aaa" stroke="#555" />
        <path d="M3.500 2.500h6v6h-6z" fill="#eee" stroke="#555" />
      </Icon>
      <Icon w={13} h={11} cls="ml-[5px]">
        <path d="M.5.5h12v10H.5z" fill="#aaa" stroke="#555" />
        <path d="M2 1h3v6H2zM7 1h3v6H7z" fill="#fff" />
      </Icon>
      <span className="ml-[11px] w-[27px] text-[10px] text-[#777]">170%</span>
      <Icon w={13} h={13} cls="ml-[6px]">
        <circle cx="6.500" cy="6.500" r="6" fill="#eee" stroke="#bbb" />
        <path d="M3.500 6.500h6" stroke="#aaa" strokeWidth="1.500" />
      </Icon>
      <Icon w={96} h={7}>
        <path d="M0 3.500h96M47.500 0v7" stroke="#a2a2a4" />
      </Icon>
      <Icon w={13} h={13}>
        <circle cx="6.500" cy="6.500" r="6" fill="#eee" stroke="#bbb" />
        <path d="M3.500 6.500h6M6.500 3.500v6" stroke="#aaa" strokeWidth="1.500" />
      </Icon>
    </div>
  )
}

export default function App() {
  return (
    <div className="h-[720px] w-[1280px] overflow-hidden bg-black pt-[19px] font-['Open_Sans','Noto_Sans_Khmer',sans-serif] text-[11px]">
      <div className="flex h-[682px]">
        <div className="flex w-[1276px] shrink-0 flex-col">
          <TitleBar />
          <TabStrip />
          <Ribbon />
          <FormulaBar />
          <div className="flex h-[493px]">
            <Sheet />
            <VerticalScroll />
          </div>
          <SheetTabs />
          <StatusBar />
        </div>
        {/* sliver of the window behind */}
        <div className="flex w-[4px] flex-col bg-white">
          <div className="h-[24px] bg-[#cfd6de]" />
          <div className="h-[20px] bg-[#57606e]" />
          <div className="h-[137px] bg-[#f4f4f4]" />
          <div className="h-[127px] bg-[#a3a0a8]" />
          <div className="h-px bg-black" />
          <div className="mt-[58px] h-px bg-black" />
          <div className="mt-[58px] h-px bg-black" />
          <div className="mt-[58px] h-px bg-black" />
          <div className="mt-[58px] h-px bg-black" />
          <div className="mt-[58px] h-[2px] bg-black" />
          <div className="mt-[40px] h-[14px] bg-[#8d9288]" />
        </div>
      </div>
    </div>
  )
}
